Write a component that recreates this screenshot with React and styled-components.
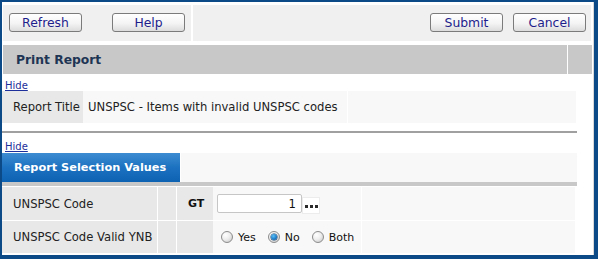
import React from 'react';
import styled, { createGlobalStyle } from 'styled-components';

const GlobalStyle = createGlobalStyle`
  html, body {
    margin: 0;
    padding: 0;
    background: #ffffff;
  }
  body {
    font-family: 'DejaVu Sans', Verdana, sans-serif;
    color: #222;
  }
`;

const toolbarLeft = ['Refresh', 'Help'];
const toolbarRight = ['Submit', 'Cancel'];

const radios = [
  { label: 'Yes', checked: false },
  { label: 'No', checked: true },
  { label: 'Both', checked: false },
];

const App = () => {
  return (
    <>
      <GlobalStyle />
      <StyledFrame>
        <StyledToolbar>
          <StyledToolCell $gap={30} $pad='0 0 0 6px'>
            {toolbarLeft.map((b) => (
              <StyledButton key={b}>{b}</StyledButton>
            ))}
          </StyledToolCell>
          <StyledToolCell $gap={10} $grow $justify='flex-end' $pad='0 5px 0 0'>
            {toolbarRight.map((b) => (
              <StyledButton key={b}>{b}</StyledButton>
            ))}
          </StyledToolCell>
        </StyledToolbar>

        <StyledHeaderRow>
          <StyledHeaderTitle>Print Report</StyledHeaderTitle>
          <StyledHeaderEnd />
        </StyledHeaderRow>

        <StyledHideLink href='#' $top={6}>Hide</StyledHideLink>
        <StyledRow $cols='81px 264px 1px 228px'>
          <StyledLabel>Report Title</StyledLabel>
          <StyledValue>UNSPSC - Items with invalid UNSPSC codes</StyledValue>
          <span />
          <StyledValue />
        </StyledRow>

        <StyledDivider />

        <StyledHideLink href='#' $top={8}>Hide</StyledHideLink>
        <StyledTabRow>
          <StyledTab>Report Selection Values</StyledTab>
          <StyledValue />
        </StyledTabRow>
        <StyledTabBar />

        <StyledGrid>
          <StyledRow $cols='155px 1px 18px 1px 36px 148px 1px 213px' $h={33}>
            <StyledLabel>UNSPSC Code</StyledLabel>
            <span />
            <StyledLabel />
            <span />
            <StyledOperator>GT</StyledOperator>
            <StyledValue $pad='0 0 0 4px'>
              <StyledInput defaultValue='1' />
              <StyledLookup>
                <i />
                <i />
                <i />
              </StyledLookup>
            </StyledValue>
            <span />
            <StyledValue />
          </StyledRow>
          <StyledRow $cols='155px 1px 18px 1px 36px 148px 1px 213px' $h={32}>
            <StyledLabel>UNSPSC Code Valid YNB</StyledLabel>
            <span />
            <StyledLabel />
            <span />
            <StyledLabel />
            <StyledValue $pad='0 0 0 8px'>
              {radios.map((r) => (
                <StyledRadioOption key={r.label}>
                  <StyledRadio $checked={r.checked} />
                  {r.label}
                </StyledRadioOption>
              ))}
            </StyledValue>
            <span />
            <StyledValue />
          </StyledRow>
        </StyledGrid>
      </StyledFrame>
    </>
  );
};

export default App;

const StyledFrame = styled.div`
  box-sizing: border-box;
  width: 598px;
  height: 259px;
  border-style: solid;
  border-color: #0b4a86;
  border-width: 2px 4px 4px 2px;
  background: #ffffff;
  box-shadow: inset -1px 0 0 #d8d8d8;
  display: flex;
  flex-direction: column;
  overflow: hidden;
`;

const StyledToolbar = styled.div`
  display: flex;
  gap: 2px;
  margin: 3px 3px 0 1px;
  height: 36px;
`;

const StyledToolCell = styled.div`
  display: flex;
  align-items: center;
  gap: ${(p) => p.$gap}px;
  justify-content: ${(p) => p.$justify || 'flex-start'};
  width: ${(p) => (p.$grow ? 'auto' : '188px')};
  flex: ${(p) => (p.$grow ? 1 : 'none')};
  padding: ${(p) => p.$pad};
  padding-bottom: 1px;
  box-sizing: border-box;
  background: #f0f0f0;
`;

const StyledButton = styled.button`
  box-sizing: border-box;
  width: 73px;
  height: 19px;
  padding: 0;
  border: 1px solid #7b7b7b;
  border-radius: 3px;
  background: linear-gradient(#ffffff 0%, #f4f4f4 55%, #dcdcdc 100%);
  color: #1d1d8c;
  font-family: 'DejaVu Sans', Verdana, sans-serif;
  font-size: 12.4px;
  line-height: 17px;
  cursor: pointer;
`;

const StyledHeaderRow = styled.div`
  display: flex;
  gap: 1px;
  height: 29px;
  margin: 4px 0 0 1px;
`;

const StyledHeaderTitle = styled.div`
  width: 564px;
  background: #c8c8c8;
  display: flex;
  align-items: center;
  padding-left: 13px;
  box-sizing: border-box;
  font-size: 12.3px;
  font-weight: bold;
  color: #1e3554;
`;

const StyledHeaderEnd = styled.div`
  width: 24px;
  background: #c8c8c8;
`;

const StyledHideLink = styled.a`
  display: block;
  align-self: flex-start;
  height: 11px;
  margin: ${(p) => p.$top}px 0 0 3px;
  font-size: 10px;
  line-height: 11px;
  color: #1c2f9a;
  text-decoration: underline;
`;

const StyledRow = styled.div`
  display: grid;
  grid-template-columns: ${(p) => p.$cols};
  height: ${(p) => p.$h || 32}px;
`;

const StyledLabel = styled.div`
  background: #e8e8e8;
  display: flex;
  align-items: center;
  padding-left: 11px;
  font-size: 11.6px;
  color: #222;
  white-space: nowrap;
`;

const StyledOperator = styled(StyledLabel)`
  padding: 0 0 0 11px;
  font-size: 11px;
  font-weight: bold;
  color: #111;
`;

const StyledValue = styled.div`
  background: #f8f8f8;
  display: flex;
  align-items: center;
  padding: ${(p) => p.$pad || '0 0 0 5px'};
  font-size: 11.6px;
  color: #222;
  white-space: nowrap;
`;

const StyledDivider = styled.div`
  height: 2px;
  width: 575px;
  margin-top: 8px;
  background: #a0a0a0;
`;

const StyledTabRow = styled.div`
  display: grid;
  grid-template-columns: 178px 396px;
  column-gap: 1px;
  height: 29px;
  margin-top: 1px;
`;

const StyledTab = styled.div`
  background: linear-gradient(#3d8cd2 0%, #1c72c0 50%, #0d62b2 100%);
  color: #ffffff;
  font-size: 11.3px;
  font-weight: bold;
  display: flex;
  align-items: center;
  padding-left: 12px;
`;

const StyledTabBar = styled.div`
  height: 4px;
  width: 575px;
  background: #c8c8c8;
`;

const StyledGrid = styled.div`
  display: flex;
  flex-direction: column;
  gap: 1px;
  margin-top: 1px;
`;

const StyledInput = styled.input`
  box-sizing: border-box;
  width: 85px;
  height: 19px;
  margin: 0;
  border: 1px solid #c6c6c6;
  border-radius: 2px;
  background: #ffffff;
  text-align: right;
  padding: 0 5px 0 0;
  font-family: 'DejaVu Sans', Verdana, sans-serif;
  font-size: 11.6px;
  color: #111;
  outline: none;
`;

const StyledLookup = styled.span`
  box-sizing: border-box;
  width: 18px;
  height: 17px;
  margin-top: 3px;
  padding-top: 2px;
  border: 1px solid #ececec;
  background: #ffffff;
  display: flex;
  align-items: center;
  justify-content: center;
  gap: 2px;

  i {
    display: block;
    width: 3px;
    height: 3px;
    background: #2a2a2a;
  }
`;

const StyledRadioOption = styled.label`
  display: flex;
  align-items: center;
  gap: 5px;
  margin-right: 12px;
  font-size: 11px;
  color: #111;
`;

const StyledRadio = styled.span`
  box-sizing: border-box;
  width: 12px;
  height: 12px;
  border-radius: 50%;
  border: 1px solid #8c8c8c;
  background: radial-gradient(circle at 35% 30%, #ffffff 0%, #eeeeee 45%, #c4c4c4 100%);
  display: flex;
  align-items: center;
  justify-content: center;

  &::after {
    content: '';
    display: ${(p) => (p.$checked ? 'block' : 'none')};
    width: 6px;
    height: 6px;
    border-radius: 50%;
    background: radial-gradient(circle at 40% 35%, #5cc0f4 0%, #1a78c6 60%, #0a4a8a 100%);
    box-shadow: 0 0 0 0.5px #0d3b6a;
  }
`;
